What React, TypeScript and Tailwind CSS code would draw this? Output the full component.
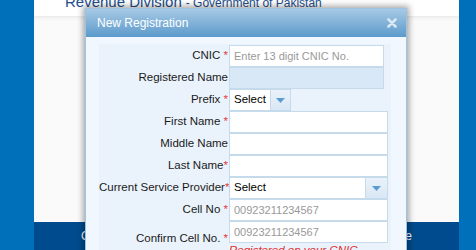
import React from "react";

const font = { fontFamily: '"Liberation Sans", Arial, sans-serif' };

function Label({ text, req, space = true }: { text: string; req?: boolean; space?: boolean }) {
  return (
    <div className="w-[130px] shrink-0 whitespace-nowrap pr-[1px] text-right text-[11.5px] text-[#1a1a1a]">
      {text}
      {req && <span className="text-[#e8383d]">{space ? " *" : "*"}</span>}
    </div>
  );
}

function Arrow() {
  return (
    <div className="flex h-full w-[22px] items-center justify-center border-l border-[#c5dbec] bg-gradient-to-b from-[#eaf2fa] to-[#d9e7f4]">
      <svg width="9" height="5" viewBox="0 0 9 5">
        <path d="M0 0h9L4.5 5z" fill="#5b9bd0" />
      </svg>
    </div>
  );
}

function Row({ children, label, req, space }: { children: React.ReactNode; label: string; req?: boolean; space?: boolean }) {
  return (
    <div className="flex h-[22px] items-center">
      <Label text={label} req={req} space={space} />
      {children}
    </div>
  );
}

function Input({ w, placeholder, readOnly }: { w: string; placeholder?: string; readOnly?: boolean }) {
  return (
    <div
      className={`flex h-[22px] items-center border border-[#c5dbec] px-[4px] text-[11px] text-[#999] ${w} ${
        readOnly ? "bg-[#d8e8f6]" : "bg-white"
      }`}
    >
      {placeholder}
    </div>
  );
}

export default function App() {
  return (
    <div className="relative h-[250px] w-[476px] overflow-hidden bg-[#0070ba]" style={font}>
      {/* page */}
      <div className="ml-[34px] flex h-full w-[425px] flex-col">
        <div className="h-[16px] bg-white">
          <div className="-mt-[9px] flex items-baseline pl-[31px] text-[#1d4f8e]">
            <span className="text-[15px]">Revenue Division</span>
            <span className="ml-[4px] text-[12px]">- Government of Pakistan</span>
          </div>
        </div>
        <div className="flex-1 border-t border-[#ececec] bg-[#fafafa] shadow-[inset_0_2px_3px_rgba(0,0,0,0.04)]" />
        <div className="flex h-[28px] items-center justify-between bg-[#004b8d] px-[47px] text-[12px] text-white">
          <span>Copyright © Revenue Division</span>
          <span>Best viewed in Chrome</span>
        </div>
      </div>

      {/* dialog */}
      <div className="absolute left-[85px] top-[8px] w-[322px] border border-[#9fc2e0] bg-[#f0f7fe] shadow-[0_0_6px_2px_rgba(0,0,0,0.35)]">
        <div className="flex h-[28px] items-center justify-between bg-gradient-to-b from-[#a6c9e5] to-[#5b9acb] pl-[11px] pr-[9px]">
          <span className="text-[12px] text-white">New Registration</span>
          <svg width="10" height="10" viewBox="0 0 10 10">
            <path d="M1.5 1.5l7 7M8.5 1.5l-7 7" stroke="#dbe7f2" strokeWidth="2.6" strokeLinecap="round" />
          </svg>
        </div>
        <div className="pl-[13px] pr-[15px] pt-[7px]">
          <div className="bg-[#eaf3fc] pt-[1px] pb-[20px]">
            <Row label="CNIC" req>
              <Input w="w-[155px]" placeholder="Enter 13 digit CNIC No." />
            </Row>
            <Row label="Registered Name">
              <Input w="w-[155px]" readOnly />
            </Row>
            <Row label="Prefix" req>
              <div className="flex h-[22px] w-[62px] border border-[#c5dbec] bg-white">
                <div className="flex flex-1 items-center px-[4px] text-[11.5px] text-black">Select</div>
                <Arrow />
              </div>
            </Row>
            <Row label="First Name" req>
              <Input w="w-[159px]" />
            </Row>
            <Row label="Middle Name">
              <Input w="w-[159px]" />
            </Row>
            <Row label="Last Name" req space={false}>
              <Input w="w-[159px]" />
            </Row>
            <Row label="Current Service Provider" req space={false}>
              <div className="flex h-[22px] w-[159px] border border-[#c5dbec] bg-white">
                <div className="flex flex-1 items-center px-[4px] text-[11.5px] text-black">Select</div>
                <Arrow />
              </div>
            </Row>
            <Row label="Cell No" req>
              <Input w="w-[159px]" placeholder="00923211234567" />
            </Row>
            <div className="flex items-center">
              <Label text="Confirm Cell No." req />
              <div>
                <Input w="w-[159px]" placeholder="00923211234567" />
                <div className="text-[11.5px] italic leading-[14px] text-[#e32b2b]">Registered on your CNIC</div>
              </div>
            </div>
          </div>
        </div>
      </div>
    </div>
  );
}
